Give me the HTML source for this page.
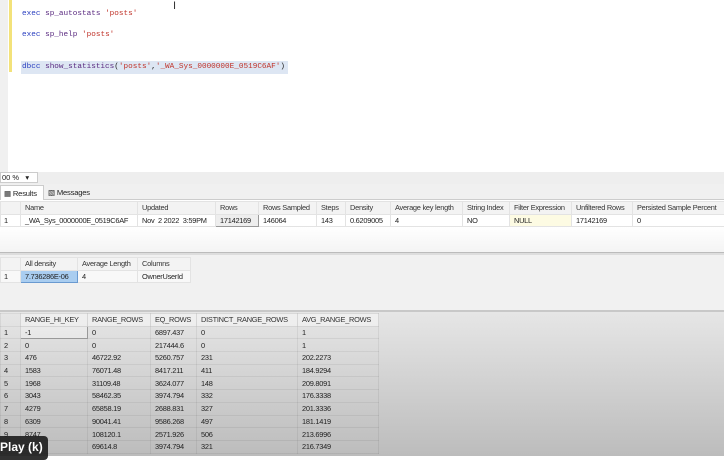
<!DOCTYPE html>
<html><head><style>
*{margin:0;padding:0;box-sizing:border-box}
body{width:724px;height:456px;overflow:hidden;background:#fff;font-family:"Liberation Sans",Arial,sans-serif;font-size:8px;color:#222;position:relative}
.abs{position:absolute}
.code{font-family:"Liberation Mono",monospace;font-size:7.7px;white-space:pre;position:absolute;left:22px}
.k{color:#2a3fc0}.s{color:#c0332a}.f{color:#5a2a80}
table{border-collapse:collapse;position:absolute;table-layout:fixed}
td{height:12.7px;padding:0 0 0 4px;border:1px solid #e3e3e3;white-space:nowrap;overflow:hidden;font-size:7.4px;letter-spacing:-0.25px;line-height:11px}
tr.h td{background:#f3f3f3;color:#333}
td.n{padding-left:3px;background:transparent}
.g td{border-color:rgba(0,0,0,.06)}
.g tr.h td{background:rgba(255,255,255,.4)}
</style></head><body>
<div class="abs" style="left:0;top:0;width:8px;height:172px;background:#f0f0f0"></div>
<div class="abs" style="left:9px;top:0;width:3px;height:72px;background:#f3e27a"></div>
<div class="code" style="top:10px"><span class="k">exec</span> <span class="f">sp_autostats</span> <span class="s">'posts'</span></div>
<div class="code" style="top:31px"><span class="k">exec</span> <span class="f">sp_help</span> <span class="s">'posts'</span></div>
<div class="abs" style="left:21px;top:61px;width:267px;height:13px;background:#dde6f3"></div>
<div class="code" style="top:63px"><span class="k">dbcc</span> <span class="f">show_statistics</span>(<span class="s">'posts'</span>,<span class="s">'_WA_Sys_0000000E_0519C6AF'</span>)</div>
<div class="abs" style="left:173px;top:0;font-size:11px;color:#333">I</div>
<div class="abs" style="left:0;top:172px;width:724px;height:12px;background:#eeeeee"></div>
<div class="abs" style="left:0;top:172px;width:38px;height:11px;background:#fff;border:1px solid #ccc;font-size:7.5px;padding-left:1px">00 % &nbsp; &#9662;</div>
<div class="abs" style="left:0;top:184px;width:724px;height:16px;background:#f0f0f0;border-bottom:1px solid #ccc"></div>
<div class="abs" style="left:0;top:185px;width:44px;height:15px;background:#fff;border:1px solid #ccc;border-bottom:none;font-size:7.6px;letter-spacing:-0.2px;padding:3px 0 0 3px">&#9638; Results</div>
<div class="abs" style="left:48px;top:188px;font-size:7.6px;letter-spacing:-0.2px">&#9639; Messages</div>
<table style="left:0;top:201px;width:724px">
<colgroup><col style="width:20px"><col style="width:117px"><col style="width:78px"><col style="width:43px"><col style="width:58px"><col style="width:29px"><col style="width:45px"><col style="width:72px"><col style="width:47px"><col style="width:62px"><col style="width:61px"><col style="width:92px"></colgroup>
<tr class="h"><td></td><td>Name</td><td>Updated</td><td>Rows</td><td>Rows Sampled</td><td>Steps</td><td>Density</td><td>Average key length</td><td>String Index</td><td>Filter Expression</td><td>Unfiltered Rows</td><td>Persisted Sample Percent</td></tr>
<tr><td class="n">1</td><td>_WA_Sys_0000000E_0519C6AF</td><td>Nov&nbsp; 2 2022&nbsp; 3:59PM</td><td style="background:#eee;border:1px solid #999">17142169</td><td>146064</td><td>143</td><td>0.6209005</td><td>4</td><td>NO</td><td style="background:#fdfbe3">NULL</td><td>17142169</td><td>0</td></tr>
</table>
<div class="abs" style="left:0;top:227px;width:724px;height:25px;background:linear-gradient(#fff,#f4f4f4)"></div>
<div class="abs" style="left:0;top:252px;width:724px;height:3px;background:#ddd;border-top:1px solid #bbb"></div>
<div class="abs" style="left:0;top:255px;width:724px;height:55px;background:#f1f1f1"></div>
<table style="left:0;top:257px;width:190px">
<colgroup><col style="width:20px"><col style="width:57px"><col style="width:60px"><col style="width:53px"></colgroup>
<tr class="h"><td></td><td>All density</td><td>Average Length</td><td>Columns</td></tr>
<tr style="background:#f8f8f8"><td class="n">1</td><td style="background:#a9cdf0;border:1px solid #6a9ad0">7.736286E-06</td><td>4</td><td>OwnerUserId</td></tr>
</table>
<div class="abs" style="left:0;top:310px;width:724px;height:2px;background:#c8c8c8"></div>
<div class="abs" style="left:0;top:312px;width:724px;height:144px;background:linear-gradient(#e6e6e6,#bcbcbc)"></div>
<table class="g" style="left:0;top:313px;width:378px">
<colgroup><col style="width:20px"><col style="width:67px"><col style="width:63px"><col style="width:46px"><col style="width:101px"><col style="width:81px"></colgroup>
<tr class="h"><td style="background:transparent"></td><td>RANGE_HI_KEY</td><td>RANGE_ROWS</td><td>EQ_ROWS</td><td>DISTINCT_RANGE_ROWS</td><td>AVG_RANGE_ROWS</td></tr>
<tr><td class="n">1</td><td style="border:1px solid #999;background:rgba(255,255,255,.3)">-1</td><td>0</td><td>6897.437</td><td>0</td><td>1</td></tr>
<tr><td class="n">2</td><td>0</td><td>0</td><td>217444.6</td><td>0</td><td>1</td></tr>
<tr><td class="n">3</td><td>476</td><td>46722.92</td><td>5260.757</td><td>231</td><td>202.2273</td></tr>
<tr><td class="n">4</td><td>1583</td><td>76071.48</td><td>8417.211</td><td>411</td><td>184.9294</td></tr>
<tr><td class="n">5</td><td>1968</td><td>31109.48</td><td>3624.077</td><td>148</td><td>209.8091</td></tr>
<tr><td class="n">6</td><td>3043</td><td>58462.35</td><td>3974.794</td><td>332</td><td>176.3338</td></tr>
<tr><td class="n">7</td><td>4279</td><td>65858.19</td><td>2688.831</td><td>327</td><td>201.3336</td></tr>
<tr><td class="n">8</td><td>6309</td><td>90041.41</td><td>9586.268</td><td>497</td><td>181.1419</td></tr>
<tr><td class="n">9</td><td>8747</td><td>108120.1</td><td>2571.926</td><td>506</td><td>213.6996</td></tr>
<tr><td class="n">10</td><td>9911</td><td>69614.8</td><td>3974.794</td><td>321</td><td>216.7349</td></tr>
</table>
<div class="abs" style="left:-6px;top:436px;width:54px;height:24px;background:rgba(28,28,28,.9);border-radius:4px;color:#fff;font-weight:bold;font-size:12px;padding:4px 0 0 6px">Play (k)</div>
</body></html>
